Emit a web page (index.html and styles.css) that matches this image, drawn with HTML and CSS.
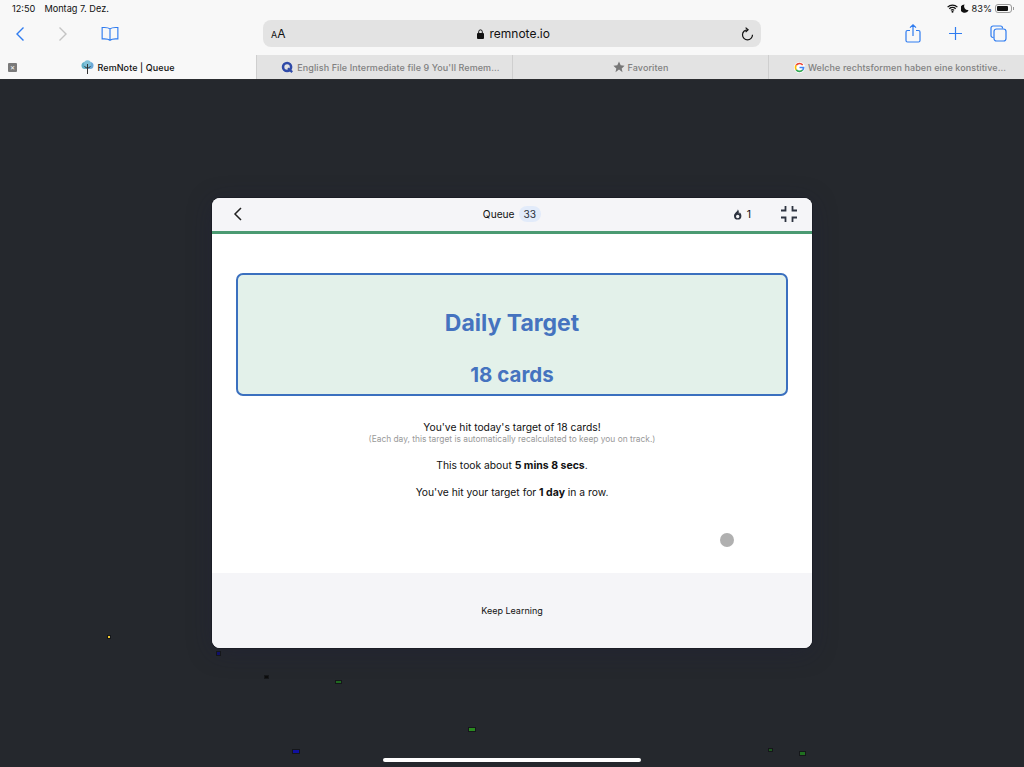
FILE: index.html
```html
<!DOCTYPE html>
<html lang="en">
<head>
  <meta charset="UTF-8" />
  <title>RemNote | Queue</title>
  <link rel="stylesheet" href="styles.css">
</head>
<body>
<div class="browser">
  <div class="status-bar">
    <div class="status-left"><span>12:50</span><span>Montag 7. Dez.</span></div>
    <div class="status-right">
      <svg width="11" height="9" viewBox="0 0 11 9"><path d="M.6 3.1a7 7 0 0 1 9.8 0M2.3 4.8a4.6 4.6 0 0 1 6.4 0M3.9 6.4a2.3 2.3 0 0 1 3.2 0" fill="none" stroke="#111" stroke-width="1.3"/><circle cx="5.5" cy="7.8" r="1" fill="#111"/></svg>
      <svg width="8" height="9" viewBox="0 0 8 9"><path d="M3.6.4a4.2 4.2 0 1 0 4 5.6A3.8 3.8 0 0 1 3.6.4z" fill="#111"/></svg>
      <span>83%</span>
      <span class="battery"><span class="battery-fill"></span></span>
    </div>
  </div>
  <div class="toolbar">
    <div class="tool-group left">
      <svg width="10" height="16" viewBox="0 0 10 16"><path d="M8.5 1.5 2 8l6.5 6.5" fill="none" stroke="#2f7cf0" stroke-width="1.4"/></svg>
      <svg width="10" height="16" viewBox="0 0 10 16"><path d="M1.5 1.5 8 8l-6.5 6.5" fill="none" stroke="#c4c4c4" stroke-width="1.4"/></svg>
      <svg width="18" height="16" viewBox="0 0 19 16"><path d="M9.5 2.6C8 1.3 5 .9 1.2 1.2v12c3.6-.3 6.8.1 8.3 1.4 1.5-1.3 4.7-1.7 8.3-1.4v-12C14 .9 11 1.3 9.5 2.6zm0 0v12" fill="none" stroke="#2f7cf0" stroke-width="1.2"/></svg>
    </div>
    <div class="address">
      <span class="aa"><small>A</small>A</span>
      <span class="url">
        <svg width="7" height="10" viewBox="0 0 7 10"><path d="M1.7 4V2.7a1.8 1.8 0 0 1 3.6 0V4" fill="none" stroke="#111" stroke-width="1"/><rect y="4" width="7" height="6" rx="1" fill="#111"/></svg>
        remnote.io
      </span>
      <svg width="13" height="14" viewBox="0 0 13 14"><path d="M6.5 2.8A5 5 0 1 0 11.5 7.8" fill="none" stroke="#111" stroke-width="1.2"/><path d="M4.6.6l2.5 2.2-2.500 2.200" fill="none" stroke="#111" stroke-width="1.2"/></svg>
    </div>
    <div class="tool-group right">
      <svg width="16" height="19" viewBox="0 0 16 19"><path d="M5 6.5H2.500a1.500 1.500 0 0 0-1.500 1.500v8.500A1.500 1.500 0 0 0 2.500 18h11a1.500 1.500 0 0 0 1.500-1.500V8a1.500 1.500 0 0 0-1.500-1.500H11M8 12V1M5 3.600 8 .8l3 2.800" fill="none" stroke="#2f7cf0" stroke-width="1.2"/></svg>
      <svg width="13" height="13" viewBox="0 0 13 13"><path d="M6.5 0v13M0 6.5h13" stroke="#2f7cf0" stroke-width="1.2"/></svg>
      <svg width="17" height="17" viewBox="0 0 17 17"><path d="M3.5 12.5H3A2 2 0 0 1 1 10.500V3a2 2 0 0 1 2-2h7.500a2 2 0 0 1 2 2v.5" fill="none" stroke="#2f7cf0" stroke-width="1.2"/><rect x="4" y="4" width="12" height="12" rx="2.5" fill="none" stroke="#2f7cf0" stroke-width="1.2"/></svg>
    </div>
  </div>
  <div class="tabs">
    <div class="tab active">
      <span class="tab-close">&#10005;</span>
      <svg width="13" height="14" viewBox="0 0 13 14"><circle cx="4" cy="5.5" r="3.5" fill="#5fb0c8"/><circle cx="9" cy="5.5" r="3.5" fill="#6aa8d8"/><circle cx="6.5" cy="3.8" r="3.5" fill="#7fc0d8"/><path d="M6.5 4v10M3.5 6.5l3 2 3-2" fill="none" stroke="#333" stroke-width="1"/></svg>
      <span>RemNote | Queue</span>
    </div>
    <div class="tab tab-shift-lg">
      <svg width="13" height="12" viewBox="0 0 15 14"><circle cx="7" cy="7" r="4.7" fill="none" stroke="#2f4aa8" stroke-width="3"/><path d="M8 8.500l5 4.500" stroke="#2f4aa8" stroke-width="2.6"/></svg>
      <span>English File Intermediate file 9 You'll Remem...</span>
    </div>
    <div class="tab">
      <svg width="12" height="12" viewBox="0 0 12 12"><path d="M6 .6l1.700 3.600 3.900.5-2.900 2.700.8 3.900L6 8.400l-3.500 2.900.8-3.900L.4 4.700l3.900-.5z" fill="#777"/></svg>
      <span>Favoriten</span>
    </div>
    <div class="tab tab-shift-sm">
      <svg width="11" height="11" viewBox="0 0 12 12"><circle cx="6" cy="6" r="6" fill="#fff"/><path d="M9.5 3.2A4.500 4.500 0 0 0 2.400 3.600" fill="none" stroke="#ea4335" stroke-width="1.8"/><path d="M2.4 3.600a4.500 4.500 0 0 0 0 4.800" fill="none" stroke="#fbbc05" stroke-width="1.8"/><path d="M2.4 8.400a4.500 4.500 0 0 0 7 .4" fill="none" stroke="#34a853" stroke-width="1.8"/><path d="M9.4 8.800A4.500 4.500 0 0 0 10.500 6H6" fill="none" stroke="#4285f4" stroke-width="1.8"/></svg>
      <span>Welche rechtsformen haben eine konstitive...</span>
    </div>
  </div>
</div>

<div class="stage">
  <div class="card">
    <div class="card-head">
      <svg class="back" width="10" height="14" viewBox="0 0 10 14"><path d="M8 1 2 7l6 6" fill="none" stroke="#222" stroke-width="1.5"/></svg>
      <div class="queue"><span>Queue</span><span class="count">33</span></div>
      <div class="streak">
        <svg width="9" height="11" viewBox="0 0 9 11"><path d="M4.800.2c.4 2-3.800 3.600-3.800 6.700a3.700 3.700 0 0 0 7.400 0C8.400 5.400 7.500 4 6.700 3.300c0 .9-.4 1.400-.9 1.500C6 3 5.800 1.200 4.800.2zM4.700 5.800a1.500 1.500 0 1 1 0 3.400 1.500 1.500 0 0 1 0-3.400z" fill="#2d3340" fill-rule="evenodd"/></svg>
        <span>1</span>
      </div>
      <svg class="shrink" width="16" height="16" viewBox="0 0 16 16"><path d="M4.500 0v4.500H0M11.500 0v4.500H16M4.500 16v-4.500H0M11.500 16v-4.500H16" fill="none" stroke="#2d3340" stroke-width="1.8"/></svg>
    </div>
    <div class="card-body">
      <div class="target-box">
        <h1>Daily Target</h1>
        <h2>18 cards</h2>
      </div>
      <p class="line-hit">You've hit today's target of 18 cards!</p>
      <p class="note">(Each day, this target is automatically recalculated to keep you on track.)</p>
      <p class="line">This took about <b>5 mins 8 secs</b>.</p>
      <p class="line">You've hit your target for <b>1 day</b> in a row.</p>
      <span class="touch-dot"></span>
    </div>
    <div class="card-foot">Keep Learning</div>
  </div>

  <i class="speck s1"></i>
  <i class="speck s2"></i>
  <i class="speck s3"></i>
  <i class="speck s4"></i>
  <i class="speck s5"></i>
  <i class="speck s6"></i>
  <i class="speck s7"></i>
  <i class="speck s8"></i>
  <div class="home-bar"></div>
</div>
</body>
</html>
```

FILE: styles.css
```css
* { box-sizing: border-box; }

html, body { height: 100%; }

body {
  margin: 0;
  display: flex;
  flex-direction: column;
  overflow: hidden;
  font-family: Inter, "Liberation Sans", sans-serif;
  background-color: #25282d;
  color: #111;
}

.browser {
  height: 80px;
  flex: none;
  background-color: #f8f8f8;
  border-bottom: 1px solid #2b2d30;
}

.status-bar {
  height: 15px;
  padding: 2px 12px 0 12px;
  display: flex;
  justify-content: space-between;
  align-items: center;
  font-size: 9.2px;
}

.status-left { display: flex; gap: 9px; }
.status-right { display: flex; align-items: center; gap: 3px; }

.battery {
  position: relative;
  width: 17px;
  height: 9px;
  padding: 1px;
  border: 1px solid #999;
  border-radius: 3px;
}

.battery::after {
  content: "";
  position: absolute;
  right: -3px;
  top: 1.5px;
  width: 1px;
  height: 3px;
  background-color: #999;
}

.battery-fill {
  display: block;
  width: 11px;
  height: 5px;
  border-radius: 1px;
  background-color: #111;
}

.toolbar {
  height: 40px;
  display: flex;
  align-items: center;
  padding-bottom: 3px;
}

.tool-group { display: flex; align-items: center; }
.tool-group.left { width: 263px; padding-left: 15px; gap: 33px; }
.tool-group.right { flex: 1; padding-left: 144px; gap: 28px; }

.address {
  width: 498px;
  height: 27px;
  padding: 0 7px 0 8px;
  display: flex;
  align-items: center;
  justify-content: space-between;
  border-radius: 8px;
  background-color: #e3e3e3;
}

.aa { font-size: 12px; }
.aa small { font-size: 9px; }

.url {
  display: flex;
  align-items: center;
  gap: 6px;
  font-size: 12px;
}

.tabs {
  height: 24px;
  display: grid;
  grid-template-columns: repeat(4, 1fr);
}

.tab {
  position: relative;
  display: flex;
  align-items: center;
  justify-content: center;
  gap: 3px;
  font-size: 9px;
  font-weight: 500;
  letter-spacing: .09px;
  color: #808080;
  background-color: #e3e3e3;
  border-left: 1px solid #cfcfcf;
  white-space: nowrap;
}

.tab.active {
  color: #111;
  background-color: #f8f8f8;
  border-left: none;
}

.tab-shift-lg { padding-left: 12px; }
.tab-shift-sm { padding-left: 7px; }

.tab-close {
  position: absolute;
  left: 8px;
  top: 8px;
  width: 9px;
  height: 9px;
  font-size: 6px;
  line-height: 9px;
  text-align: center;
  color: #fff;
  border-radius: 1px;
  background-color: #7a7a7a;
}

.stage {
  position: relative;
  flex: 1;
  display: flex;
  align-items: center;
  justify-content: center;
}

.card {
  width: 600px;
  height: 450px;
  display: flex;
  flex-direction: column;
  overflow: hidden;
  margin-top: -2px;
  border-radius: 8px;
  background-color: #fff;
  box-shadow: 0 0 0 1px #1b1d26, 0 4px 24px rgba(30, 30, 60, 0.35);
}

.card-head {
  height: 36px;
  flex: none;
  padding: 0 15px 0 21px;
  display: flex;
  align-items: center;
  background-color: #f5f5f8;
  border-bottom: 3px solid #4b9a72;
  position: relative;
}

.queue {
  position: absolute;
  left: 0;
  right: 0;
  top: 8px;
  display: flex;
  justify-content: center;
  align-items: center;
  gap: 4px;
  font-size: 10.2px;
}

.count {
  padding: 2px 5px;
  border-radius: 8px;
  background-color: #e2ebfa;
  color: #2d3340;
}

.streak {
  margin-left: auto;
  display: flex;
  align-items: center;
  gap: 5px;
  font-size: 10.5px;
}

.shrink { margin-left: 30px; }

.card-body {
  flex: 1;
  position: relative;
  padding: 39px 24px 0;
  text-align: center;
}

.target-box {
  height: 123px;
  padding-top: 32px;
  border: 2px solid #3b70bf;
  border-radius: 7px;
  background-color: #e3f1ea;
  color: #4573bf;
}

.target-box h1 {
  margin: 0;
  font-size: 23px;
  line-height: 32px;
  font-weight: 700;
}

.target-box h2 {
  margin: 22px 0 0;
  font-size: 20.5px;
  line-height: 28px;
  font-weight: 700;
}

.line-hit {
  margin: 25px 0 0;
  font-size: 10.3px;
  line-height: 13px;
}

.note {
  margin: 0;
  font-size: 8.4px;
  line-height: 10px;
  color: #999;
}

.line {
  margin: 15px 0 0;
  font-size: 10.3px;
  line-height: 13px;
}

.line + .line { margin-top: 14px; }
.line b { font-size: 10.5px; }

.touch-dot {
  position: absolute;
  left: 508px;
  top: 299px;
  width: 14px;
  height: 14px;
  border-radius: 50%;
  background-color: #b0b0b0;
}

.card-foot {
  height: 75px;
  flex: none;
  display: flex;
  align-items: center;
  justify-content: center;
  font-size: 9px;
  background-color: #f5f5f8;
}

.speck { position: absolute; display: block; box-shadow: 0 0 0 1px #15171a; }
.s1 { left: 108px; top: 556px; width: 2px; height: 2px; background-color: #f0c830; }
.s2 { left: 217px; top: 572px; width: 3px; height: 3px; background-color: #10106a; }
.s3 { left: 265px; top: 596px; width: 3px; height: 2px; background-color: #0c0c0c; }
.s4 { left: 336px; top: 601px; width: 5px; height: 2px; background-color: #206a20; }
.s5 { left: 293px; top: 670px; width: 6px; height: 3px; background-color: #1010a0; }
.s6 { left: 469px; top: 648px; width: 6px; height: 3px; background-color: #2a8a20; }
.s7 { left: 769px; top: 669px; width: 3px; height: 2px; background-color: #1f5a1f; }
.s8 { left: 800px; top: 672px; width: 5px; height: 3px; background-color: #207020; }

.home-bar {
  position: absolute;
  left: 383px;
  bottom: 5px;
  width: 258px;
  height: 4px;
  border-radius: 2px;
  background-color: #fff;
}
```
